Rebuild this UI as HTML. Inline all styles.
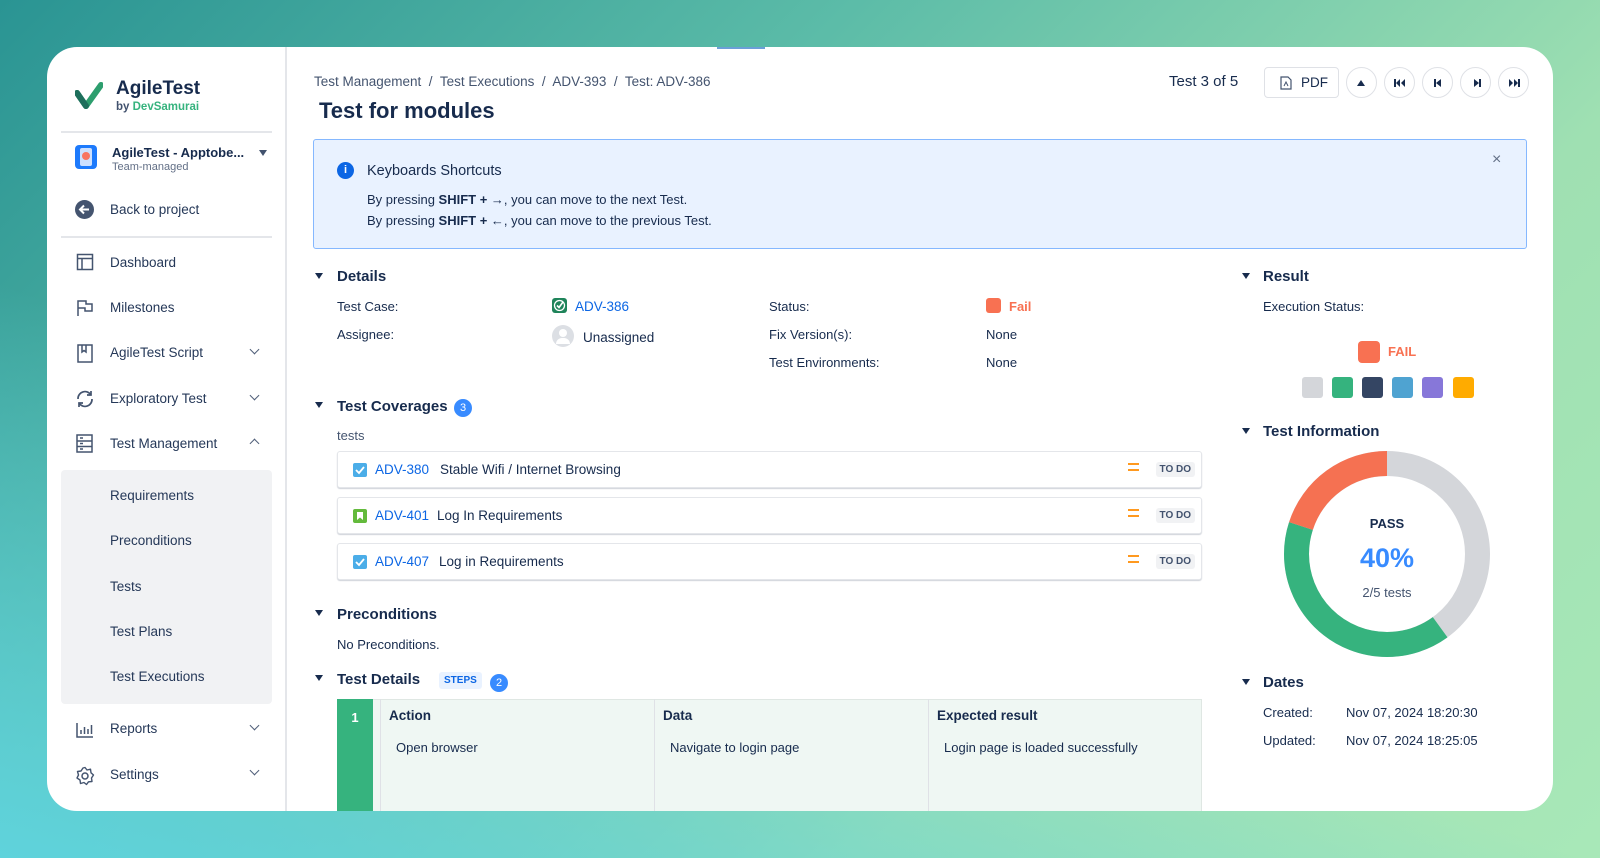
<!DOCTYPE html>
<html><head><meta charset="utf-8"><style>
*{box-sizing:border-box;margin:0;padding:0}
body{width:1600px;height:858px;overflow:hidden;font-family:"Liberation Sans",Arial,sans-serif;color:#172b4d;background:linear-gradient(135deg,#2a9493 0%,#5cbca8 35%,#9fe0b2 70%,#a8e8b8 100%);position:relative}
.bg2{position:absolute;inset:0;background:linear-gradient(20deg,#5fd3dc 0%,rgba(95,211,220,0) 40%)}
.card{position:absolute;left:47px;top:47px;width:1506px;height:764px;background:#fff;border-radius:30px;overflow:hidden}
.a{position:absolute;white-space:nowrap}
.side{position:absolute;left:0;top:0;width:240px;height:764px;border-right:2px solid #e4e6ea}
.mi{font-size:13.5px;color:#253858}
.lbl{font-size:13px;color:#172b4d}
.h{font-size:15px;font-weight:bold;color:#172b4d}
.tri{position:absolute;width:0;height:0;border-left:4.5px solid transparent;border-right:4.5px solid transparent;border-top:6px solid #172b4d}
.link{color:#0c66e4}
.row{position:absolute;left:290px;width:865px;height:37px;border:1px solid #e4e6ea;border-radius:3px;box-shadow:0 1px 1px rgba(9,30,66,.2);background:#fff}
.todo{position:absolute;right:6px;top:10px;font-size:10px;font-weight:bold;color:#42526e;background:#f1f2f4;padding:2px 4px;border-radius:3px}
.eq{position:absolute;right:62px;top:11px;width:11px;height:8px;border-top:2px solid #ff991f;border-bottom:2px solid #ff991f}
.cb{position:absolute;width:14px;height:14px;border-radius:2px}
.circ{position:absolute;width:31px;height:31px;border-radius:50%;border:1px solid #dfe1e6;background:#fff;top:20px}
.chev{position:absolute;width:7px;height:7px;border-right:1.5px solid #505f79;border-bottom:1.5px solid #505f79}
.sw{position:absolute;top:330px;width:21px;height:21px;border-radius:3px}
</style></head><body><div class="bg2"></div>
<div class="card">
<div style="position:absolute;left:670px;top:0;width:48px;height:2px;background:#6b9fd8"></div>
<div class="side">
<svg class="a" style="left:28px;top:35px" width="28" height="28" viewBox="0 0 28 28"><path d="M2 11 L11 24 L26 3" fill="none" stroke="#2d9e6e" stroke-width="6" stroke-linecap="round" stroke-linejoin="round"/><path d="M2 11 L11 24" fill="none" stroke="#1e6f5c" stroke-width="6" stroke-linecap="round"/></svg>
<div class="a" style="left:69px;top:31px;font-size:19px;font-weight:bold;color:#172b4d">AgileTest</div>
<div class="a" style="left:69px;top:54px;font-size:11.5px;font-weight:bold;color:#42526e">by <span style="color:#36b37e">DevSamurai</span></div>
<div class="a" style="left:14px;top:84px;width:211px;height:2px;background:#e4e6ea"></div>
<div class="a" style="left:28px;top:98px;width:22px;height:24px;border-radius:4px;background:#1d7afc"><div style="position:absolute;left:5px;top:3px;width:12px;height:18px;background:#cce0ff;border-radius:2px"></div><div style="position:absolute;left:7px;top:7px;width:8px;height:8px;border-radius:50%;background:#f87462"></div></div>
<div class="a" style="left:65px;top:98px;font-size:13px;font-weight:bold;color:#172b4d">AgileTest - Apptobe...</div>
<div class="a" style="left:65px;top:114px;font-size:11px;color:#626f86">Team-managed</div>
<div class="tri" style="left:212px;top:103px;border-top-color:#42526e"></div>
<div class="a" style="left:28px;top:153px;width:19px;height:19px;border-radius:50%;background:#44546f"><svg width="19" height="19" viewBox="0 0 19 19"><path d="M14 9.5H5.5M9 5.5L5 9.5L9 13.5" fill="none" stroke="#fff" stroke-width="2"/></svg></div>
<div class="a mi" style="left:63px;top:155px">Back to project</div>
<div class="a" style="left:14px;top:189px;width:211px;height:2px;background:#e4e6ea"></div>
<svg class="a" style="left:29px;top:206px" width="18" height="18" viewBox="0 0 18 18"><rect x="1.5" y="1.5" width="15" height="15" fill="none" stroke="#44546f" stroke-width="1.5"/><path d="M1.5 5.5H16.5M6 5.5V16.5" stroke="#44546f" stroke-width="1.5"/></svg>
<div class="a mi" style="left:63px;top:208px">Dashboard</div>
<svg class="a" style="left:29px;top:252px" width="18" height="18" viewBox="0 0 18 18"><path d="M2 17V2H10V5H16V12H9V9H2" fill="none" stroke="#44546f" stroke-width="1.5"/></svg>
<div class="a mi" style="left:63px;top:253px">Milestones</div>
<svg class="a" style="left:30px;top:297px" width="16" height="19" viewBox="0 0 16 19"><rect x="1" y="1" width="14" height="17" fill="none" stroke="#44546f" stroke-width="1.5"/><path d="M5 1V8L7 6.5L9 8V1" fill="none" stroke="#44546f" stroke-width="1.5"/></svg>
<div class="a mi" style="left:63px;top:298px">AgileTest Script</div><div class="chev" style="left:204px;top:299px;transform:rotate(45deg)"></div>
<svg class="a" style="left:28px;top:342px" width="20" height="20" viewBox="0 0 20 20"><path d="M3 10A7 7 0 0 1 16 6M17 10A7 7 0 0 1 4 14" fill="none" stroke="#44546f" stroke-width="1.7"/><path d="M16 2V6H12M4 18V14H8" fill="none" stroke="#44546f" stroke-width="1.7"/></svg>
<div class="a mi" style="left:63px;top:344px">Exploratory Test</div><div class="chev" style="left:204px;top:345px;transform:rotate(45deg)"></div>
<svg class="a" style="left:29px;top:387px" width="17" height="19" viewBox="0 0 17 19"><rect x="1" y="1" width="15" height="17" fill="none" stroke="#44546f" stroke-width="1.5"/><path d="M1 7H16M1 12.5H16M4 4H7M4 9.5H7M4 15H7" stroke="#44546f" stroke-width="1.5"/></svg>
<div class="a mi" style="left:63px;top:389px">Test Management</div><div class="chev" style="left:204px;top:393px;transform:rotate(-135deg)"></div>
<div class="a" style="left:14px;top:423px;width:211px;height:234px;background:#f1f2f4;border-radius:4px"></div>
<div class="a mi" style="left:63px;top:441px">Requirements</div>
<div class="a mi" style="left:63px;top:486px">Preconditions</div>
<div class="a mi" style="left:63px;top:532px">Tests</div>
<div class="a mi" style="left:63px;top:577px">Test Plans</div>
<div class="a mi" style="left:63px;top:622px">Test Executions</div>
<svg class="a" style="left:29px;top:675px" width="18" height="16" viewBox="0 0 18 16"><path d="M1 1V15H17M5 12V8M8.5 12V5M12 12V7M15.5 12V3" fill="none" stroke="#44546f" stroke-width="1.5"/></svg>
<div class="a mi" style="left:63px;top:674px">Reports</div><div class="chev" style="left:204px;top:675px;transform:rotate(45deg)"></div>
<svg class="a" style="left:28px;top:719px" width="20" height="20" viewBox="0 0 20 20"><circle cx="10" cy="10" r="3" fill="none" stroke="#44546f" stroke-width="1.5"/><path d="M10 1.5L12 4L15.5 3.2L16 6.8L18.5 9L16.5 12L17 15.5L13.5 15.8L11.5 18.5L9 16.5L5.5 17.5L5 14L2 12L3.5 9L2.5 5.5L6 5L8 2Z" fill="none" stroke="#44546f" stroke-width="1.4" stroke-linejoin="round"/></svg>
<div class="a mi" style="left:63px;top:720px">Settings</div><div class="chev" style="left:204px;top:720px;transform:rotate(45deg)"></div>
</div>

<div class="a" style="left:267px;top:27px;font-size:13.5px;color:#44546f">Test Management &nbsp;/&nbsp; Test Executions &nbsp;/&nbsp; ADV-393 &nbsp;/&nbsp; Test: ADV-386</div>
<div class="a" style="left:272px;top:51px;font-size:22px;font-weight:bold;color:#172b4d">Test for modules</div>
<div class="a" style="left:1122px;top:26px;font-size:15px;color:#172b4d">Test 3 of 5</div>
<div class="a" style="left:1217px;top:20px;width:75px;height:31px;border:1px solid #dfe1e6;border-radius:4px;font-size:13.5px;color:#172b4d;padding:7px 0 0 36px">PDF<svg style="position:absolute;left:15px;top:8px" width="12" height="14" viewBox="0 0 12 14"><path d="M1 1H8L11 4V13H1Z" fill="none" stroke="#44546f" stroke-width="1.2"/><path d="M4 10L6 6L8 10" fill="none" stroke="#44546f" stroke-width="1"/></svg></div>
<div class="circ" style="left:1299px"><div class="tri" style="left:10px;top:12px;border-top:none;border-bottom:6px solid #172b4d"></div></div>
<div class="circ" style="left:1337px"><svg style="position:absolute;left:9px;top:10px" width="12" height="10" viewBox="0 0 12 10"><path d="M1 1V9" stroke="#172b4d" stroke-width="2"/><path d="M6 1V9L2 5Z M11 1V9L7 5Z" fill="#172b4d"/></svg></div>
<div class="circ" style="left:1375px"><svg style="position:absolute;left:10px;top:10px" width="10" height="10" viewBox="0 0 10 10"><path d="M2 1V9" stroke="#172b4d" stroke-width="2"/><path d="M8 1V9L3 5Z" fill="#172b4d"/></svg></div>
<div class="circ" style="left:1413px"><svg style="position:absolute;left:11px;top:10px" width="10" height="10" viewBox="0 0 10 10"><path d="M8 1V9" stroke="#172b4d" stroke-width="2"/><path d="M2 1V9L7 5Z" fill="#172b4d"/></svg></div>
<div class="circ" style="left:1451px"><svg style="position:absolute;left:9px;top:10px" width="12" height="10" viewBox="0 0 12 10"><path d="M11 1V9" stroke="#172b4d" stroke-width="2"/><path d="M1 1V9L5 5Z M6 1V9L10 5Z" fill="#172b4d"/></svg></div>

<div class="a" style="left:266px;top:92px;width:1214px;height:110px;background:#e9f2ff;border:1px solid #85b8ff;border-radius:3px"></div>
<div class="a" style="left:290px;top:115px;width:17px;height:17px;border-radius:50%;background:#0c66e4;color:#fff;font-size:11px;font-weight:bold;text-align:center;line-height:17px">i</div>
<div class="a" style="left:320px;top:116px;font-size:14.5px;color:#172b4d">Keyboards Shortcuts</div>
<div class="a" style="left:320px;top:145px;font-size:13px;color:#172b4d">By pressing <b>SHIFT + →</b>, you can move to the next Test.</div>
<div class="a" style="left:320px;top:166px;font-size:13px;color:#172b4d">By pressing <b>SHIFT + ←</b>, you can move to the previous Test.</div>
<div class="a" style="left:1445px;top:104px;font-size:16px;color:#626f86">×</div>

<div class="tri" style="left:268px;top:226px"></div><div class="a h" style="left:290px;top:221px">Details</div>
<div class="a lbl" style="left:290px;top:252px">Test Case:</div>
<div class="a" style="left:505px;top:251px;width:15px;height:15px;border-radius:3px;background:#1f845a"><svg width="15" height="15" viewBox="0 0 15 15"><circle cx="7.5" cy="7.5" r="5" fill="none" stroke="#fff" stroke-width="1.3"/><path d="M5 7.5L7 9.5L11 4" fill="none" stroke="#fff" stroke-width="1.6"/></svg></div>
<div class="a link" style="left:528px;top:252px;font-size:13.5px">ADV-386</div>
<div class="a lbl" style="left:290px;top:280px">Assignee:</div>
<div class="a" style="left:505px;top:278px;width:22px;height:22px;border-radius:50%;background:#dcdfe4"><div style="position:absolute;left:7px;top:4px;width:8px;height:8px;border-radius:50%;background:#fff"></div><div style="position:absolute;left:4px;top:13px;width:14px;height:6px;border-radius:7px 7px 0 0;background:#fff"></div></div>
<div class="a" style="left:536px;top:283px;font-size:13.5px">Unassigned</div>
<div class="a lbl" style="left:722px;top:252px">Status:</div>
<div class="a" style="left:939px;top:251px;width:15px;height:15px;border-radius:3px;background:#f87152"></div>
<div class="a" style="left:962px;top:252px;font-size:13px;font-weight:bold;color:#f87152">Fail</div>
<div class="a lbl" style="left:722px;top:280px">Fix Version(s):</div>
<div class="a lbl" style="left:939px;top:280px">None</div>
<div class="a lbl" style="left:722px;top:308px">Test Environments:</div>
<div class="a lbl" style="left:939px;top:308px">None</div>

<div class="tri" style="left:268px;top:355px"></div><div class="a h" style="left:290px;top:351px">Test Coverages</div>
<div class="a" style="left:407px;top:352px;width:18px;height:18px;border-radius:50%;background:#388bff;color:#fff;font-size:11px;text-align:center;line-height:18px">3</div>
<div class="a" style="left:290px;top:381px;font-size:13px;color:#44546f">tests</div>
<div class="row" style="top:404px"><div class="cb" style="left:15px;top:11px;background:#4bade8"><svg width="14" height="14"><path d="M3 7L6 10L11 4" fill="none" stroke="#fff" stroke-width="1.8"/></svg></div><div class="a link" style="left:37px;top:10px;font-size:13.5px">ADV-380</div><div class="a" style="left:102px;top:10px;font-size:13.5px">Stable Wifi / Internet Browsing</div><div class="eq"></div><div class="todo">TO DO</div></div>
<div class="row" style="top:450px"><div class="cb" style="left:15px;top:11px;background:#63ba3c"><svg width="14" height="14"><path d="M4 3H10V11L7 8.5L4 11Z" fill="#fff"/></svg></div><div class="a link" style="left:37px;top:10px;font-size:13.5px">ADV-401</div><div class="a" style="left:99px;top:10px;font-size:13.5px">Log In Requirements</div><div class="eq"></div><div class="todo">TO DO</div></div>
<div class="row" style="top:496px"><div class="cb" style="left:15px;top:11px;background:#4bade8"><svg width="14" height="14"><path d="M3 7L6 10L11 4" fill="none" stroke="#fff" stroke-width="1.8"/></svg></div><div class="a link" style="left:37px;top:10px;font-size:13.5px">ADV-407</div><div class="a" style="left:101px;top:10px;font-size:13.5px">Log in Requirements</div><div class="eq"></div><div class="todo">TO DO</div></div>

<div class="tri" style="left:268px;top:563px"></div><div class="a h" style="left:290px;top:559px">Preconditions</div>
<div class="a lbl" style="left:290px;top:590px">No Preconditions.</div>
<div class="tri" style="left:268px;top:628px"></div><div class="a h" style="left:290px;top:624px">Test Details</div>
<div class="a" style="left:392px;top:625px;font-size:10px;font-weight:bold;color:#0c66e4;background:#e9f2ff;padding:3px 5px;border-radius:3px">STEPS</div>
<div class="a" style="left:443px;top:627px;width:18px;height:18px;border-radius:50%;background:#388bff;color:#fff;font-size:11px;text-align:center;line-height:18px">2</div>
<div class="a" style="left:290px;top:652px;width:865px;height:120px;background:#eff7f3;border:1px solid #dfe7e3"></div>
<div class="a" style="left:290px;top:652px;width:36px;height:120px;background:#36b37e;color:#fff;font-size:13px;font-weight:bold;text-align:center;padding-top:11px">1</div>
<div class="a" style="left:333px;top:652px;width:1px;height:120px;background:#dfe1e6"></div>
<div class="a" style="left:607px;top:652px;width:1px;height:120px;background:#dfe1e6"></div>
<div class="a" style="left:881px;top:652px;width:1px;height:120px;background:#dfe1e6"></div>
<div class="a" style="left:342px;top:661px;font-size:13.5px;font-weight:bold;color:#172b4d">Action</div>
<div class="a" style="left:616px;top:661px;font-size:13.5px;font-weight:bold;color:#172b4d">Data</div>
<div class="a" style="left:890px;top:661px;font-size:13.5px;font-weight:bold;color:#172b4d">Expected result</div>
<div class="a lbl" style="left:349px;top:693px">Open browser</div>
<div class="a lbl" style="left:623px;top:693px">Navigate to login page</div>
<div class="a lbl" style="left:897px;top:693px">Login page is loaded successfully</div>

<div class="tri" style="left:1195px;top:226px"></div><div class="a h" style="left:1216px;top:221px">Result</div>
<div class="a lbl" style="left:1216px;top:252px">Execution Status:</div>
<div class="a" style="left:1311px;top:294px;width:22px;height:22px;border-radius:4px;background:#f87152"></div>
<div class="a" style="left:1341px;top:297px;font-size:13px;font-weight:bold;color:#f87152">FAIL</div>
<div class="sw" style="left:1255px;background:#d4d6da"></div>
<div class="sw" style="left:1285px;background:#35b37e"></div>
<div class="sw" style="left:1315px;background:#344563"></div>
<div class="sw" style="left:1345px;background:#4fa3d1"></div>
<div class="sw" style="left:1375px;background:#8777d9"></div>
<div class="sw" style="left:1406px;background:#ffab00"></div>
<div class="tri" style="left:1195px;top:381px"></div><div class="a h" style="left:1216px;top:376px">Test Information</div>
<svg class="a" style="left:1237px;top:404px" width="206" height="206" viewBox="0 0 206 206">
<g transform="rotate(-90 103 103)" fill="none" stroke-width="25">
<circle cx="103" cy="103" r="90.5" stroke="#d4d6da"/>
<circle cx="103" cy="103" r="90.5" stroke="#36b37e" stroke-dasharray="227.4 1000" stroke-dashoffset="-227.4"/>
<circle cx="103" cy="103" r="90.5" stroke="#f57152" stroke-dasharray="113.7 1000" stroke-dashoffset="-454.8"/>
</g>
<text x="103" y="77" text-anchor="middle" font-family="Liberation Sans" font-weight="bold" font-size="13" fill="#172b4d">PASS</text>
<text x="103" y="116" text-anchor="middle" font-family="Liberation Sans" font-weight="bold" font-size="27" fill="#388bff">40%</text>
<text x="103" y="146" text-anchor="middle" font-family="Liberation Sans" font-size="13" fill="#44546f">2/5 tests</text>
</svg>
<div class="tri" style="left:1195px;top:632px"></div><div class="a h" style="left:1216px;top:627px">Dates</div>
<div class="a lbl" style="left:1216px;top:658px">Created:</div><div class="a lbl" style="left:1299px;top:658px">Nov 07, 2024 18:20:30</div>
<div class="a lbl" style="left:1216px;top:686px">Updated:</div><div class="a lbl" style="left:1299px;top:686px">Nov 07, 2024 18:25:05</div>
</div>
</body></html>
